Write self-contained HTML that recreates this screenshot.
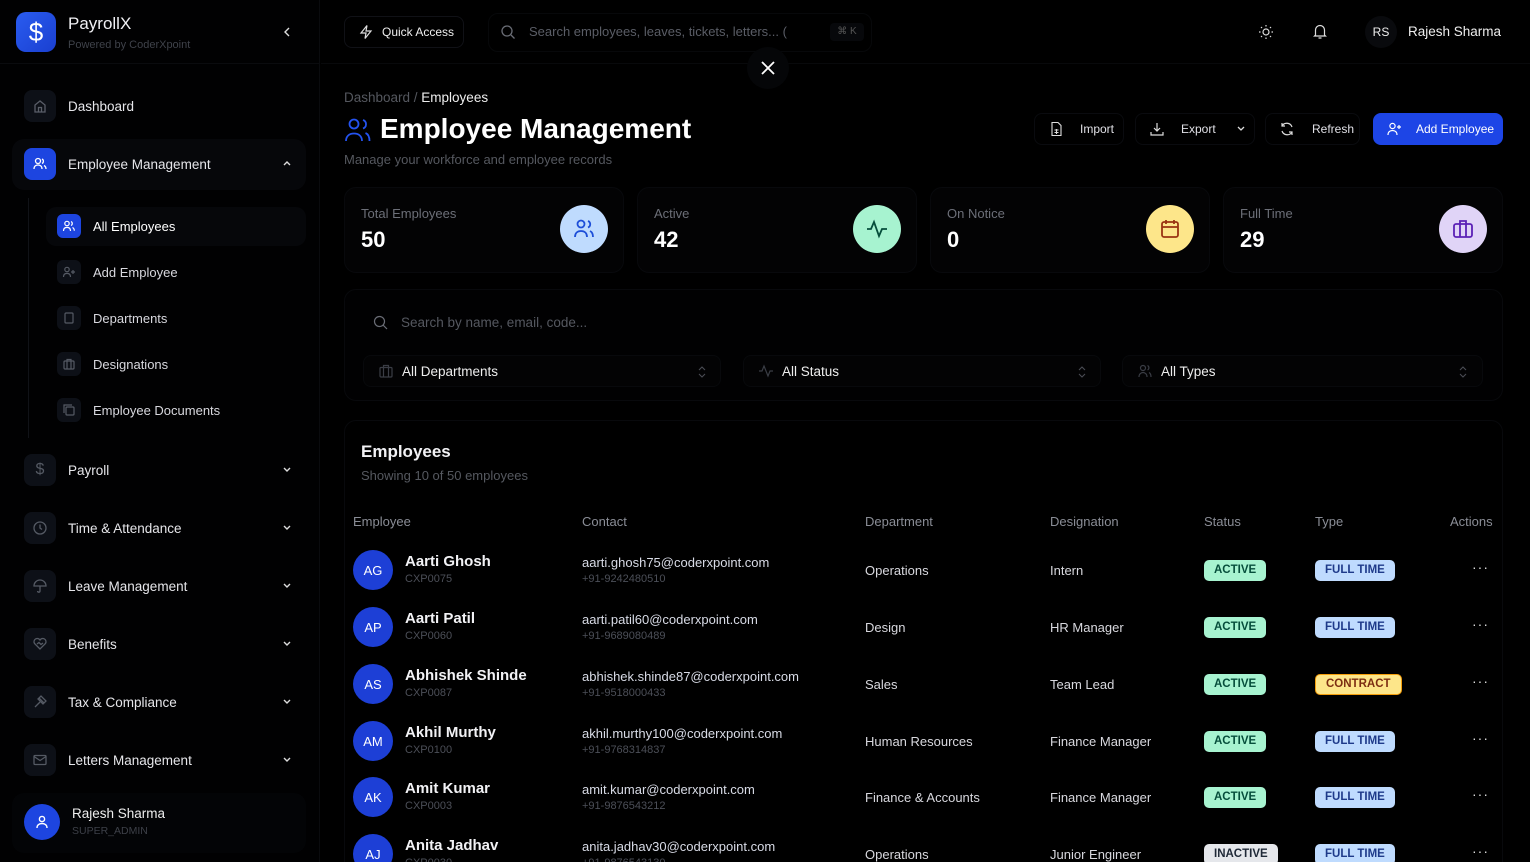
<!DOCTYPE html>
<html><head><meta charset="utf-8"><style>
*{box-sizing:border-box;margin:0;padding:0}
html,body{width:1530px;height:862px;overflow:hidden}
body{background:#000;font-family:"Liberation Sans",sans-serif;color:#e8e8ee;position:relative}
.abs{position:absolute}
svg{display:block}
.side{left:0;top:0;width:320px;height:862px;background:#010102;border-right:1px solid #0a0b0e}
.ic{width:32px;height:32px;border-radius:8px;background:#0d1017;display:flex;align-items:center;justify-content:center}
.nav{position:absolute;left:24px;display:flex;align-items:center;font-size:13.5px;color:#e6e6ea}
.nav .ic{margin-right:12px}
.chev{position:absolute;left:282px}
.sub{position:absolute;left:57px;display:flex;align-items:center;font-size:13px;color:#d8d8de}
.sub .ic{width:24px;height:24px;border-radius:6px;margin-right:12px}
.card{background:#030304;border:1px solid #08090c;border-radius:12px}
.lbl{font-size:13px;color:#6c6f78}
.num{font-size:22px;font-weight:bold;color:#fff}
.circ{width:48px;height:48px;border-radius:50%;display:flex;align-items:center;justify-content:center}
.th{position:absolute;top:514px;font-size:13px;color:#8a8d96}
.av{width:40px;height:40px;border-radius:50%;background:#1d3fd6;color:#fff;font-size:13px;display:flex;align-items:center;justify-content:center}
.nm{font-size:15px;font-weight:bold;color:#f2f2f5}
.cd{font-size:11px;color:#4c4f58;margin-top:3px}
.em{font-size:13px;color:#d8dbe6}
.ph{font-size:11px;color:#4c4f58;margin-top:3px}
.tx{font-size:13px;color:#d8d8de}
.b{position:absolute;height:21px;border-radius:5px;font-size:11.5px;font-weight:bold;padding:0 10px;line-height:21px}
.ba{background:#a7f3d0;color:#064e3b}
.bf{background:#bfdbfe;color:#1e3a8a}
.bc{background:#fde68a;color:#7c2d12;border:1px solid #f59e0b;line-height:19px}
.bi{background:#e5e7eb;color:#1f2937}
.dots{position:absolute;left:1472px;font-size:14px;color:#ddd;letter-spacing:1px}
.btn{position:absolute;top:113px;height:32px;border:1px solid #0a0b0f;border-radius:8px;display:flex;align-items:center;font-size:12px;color:#e0e0e6}
.sel{position:absolute;top:355px;height:32px;border:1px solid #08090c;border-radius:8px;background:#030304;display:flex;align-items:center;font-size:13.5px;color:#eee}
</style></head><body>

<div class="abs side">
  <div class="abs" style="left:16px;top:12px;width:40px;height:40px;border-radius:10px;background:linear-gradient(135deg,#2a5cf0,#1a3fd0);color:#fff;font-size:26px;display:flex;align-items:center;justify-content:center">$</div>
  <div class="abs" style="left:68px;top:14px;font-size:17px;color:#f0f0f4">PayrollX</div>
  <div class="abs" style="left:68px;top:39px;font-size:11px;color:#3f424a">Powered by CoderXpoint</div>
  <svg class="abs" style="left:282px;top:26px" width="10" height="12"><path d="M7 2 3 6 7 10" stroke="#ddd" stroke-width="1.4" fill="none"/></svg>
  <div class="abs" style="left:0;top:63px;width:320px;height:1px;background:#0a0b0e"></div>

  <div class="nav" style="top:90px"><div class="ic"><svg width="16" height="16"><path d="M3 14V7l5-4 5 4v7zM6.5 14V9.5h3V14" stroke="#5a5e68" stroke-width="1.3" fill="none"/></svg></div>Dashboard</div>

  <div class="abs" style="left:12px;top:139px;width:294px;height:51px;border-radius:12px;background:#06070a"></div>
  <div class="nav" style="top:148px"><div class="ic" style="background:#1d45e0"><svg width="16" height="16"><circle cx="6" cy="5" r="2.5" stroke="#fff" stroke-width="1.3" fill="none"/><path d="M2 13c0-3 2-4 4-4s4 1 4 4M10 3a2.5 2.5 0 010 4.5M12 9.5c1.3.7 2 1.8 2 3.5" stroke="#fff" stroke-width="1.3" fill="none"/></svg></div>Employee Management</div>
  <svg class="chev" style="top:158px" width="10" height="10"><path d="M2 7 5 4 8 7" stroke="#ddd" stroke-width="1.4" fill="none"/></svg>

  <div class="abs" style="left:28px;top:198px;width:1px;height:240px;background:#101217"></div>
  <div class="abs" style="left:46px;top:207px;width:260px;height:39px;border-radius:10px;background:#06070a"></div>
  <div class="sub" style="top:214px;left:57px"><div class="ic" style="background:#1d45e0"><svg width="14" height="14"><circle cx="5" cy="4.5" r="2.2" stroke="#fff" stroke-width="1.2" fill="none"/><path d="M1.5 12c0-2.6 1.6-3.6 3.5-3.6s3.5 1 3.5 3.6M9 2.5a2.2 2.2 0 010 4M10.5 8.5c1.2.6 1.8 1.7 1.8 3.3" stroke="#fff" stroke-width="1.2" fill="none"/></svg></div><span style="color:#fff">All Employees</span></div>
  <div class="sub" style="top:260px"><div class="ic"><svg width="14" height="14"><circle cx="5" cy="4.5" r="2.2" stroke="#555a64" stroke-width="1.2" fill="none"/><path d="M1.5 12c0-2.6 1.6-3.6 3.5-3.6s3.5 1 3.5 3.6M11 5v4M9 7h4" stroke="#555a64" stroke-width="1.2" fill="none"/></svg></div>Add Employee</div>
  <div class="sub" style="top:306px"><div class="ic"><svg width="14" height="14"><rect x="3" y="2" width="8" height="10" rx="1" stroke="#555a64" stroke-width="1.2" fill="none"/></svg></div>Departments</div>
  <div class="sub" style="top:352px"><div class="ic"><svg width="14" height="14"><rect x="2" y="4" width="10" height="8" rx="1" stroke="#555a64" stroke-width="1.2" fill="none"/><path d="M5 4V2.5h4V4M5 4v8M9 4v8" stroke="#555a64" stroke-width="1.2" fill="none"/></svg></div>Designations</div>
  <div class="sub" style="top:398px"><div class="ic"><svg width="14" height="14"><rect x="4" y="4" width="8" height="8" rx="1" stroke="#555a64" stroke-width="1.2" fill="none"/><path d="M2 10V2h8" stroke="#555a64" stroke-width="1.2" fill="none"/></svg></div>Employee Documents</div>

  <div class="nav" style="top:454px"><div class="ic" style="color:#555a64;font-size:16px">$</div>Payroll</div>
  <div class="nav" style="top:512px"><div class="ic"><svg width="16" height="16"><circle cx="8" cy="8" r="6" stroke="#555a64" stroke-width="1.3" fill="none"/><path d="M8 4.5V8l2 1.5" stroke="#555a64" stroke-width="1.3" fill="none"/></svg></div>Time &amp; Attendance</div>
  <div class="nav" style="top:570px"><div class="ic"><svg width="16" height="16"><path d="M2 8a6 6 0 0112 0zM8 8v5a1.2 1.2 0 01-2.4 0" stroke="#555a64" stroke-width="1.3" fill="none"/></svg></div>Leave Management</div>
  <div class="nav" style="top:628px"><div class="ic"><svg width="16" height="16"><path d="M8 13 2.5 7.5a3 3 0 015.5-3.5 3 3 0 015.5 3.5zM5 8l2 -1.5 2 2 2-1.5" stroke="#555a64" stroke-width="1.3" fill="none"/></svg></div>Benefits</div>
  <div class="nav" style="top:686px"><div class="ic"><svg width="16" height="16"><path d="M3 13l5-5M7 4l5 5M6 5l3-3 5 5-3 3z" stroke="#555a64" stroke-width="1.3" fill="none"/></svg></div>Tax &amp; Compliance</div>
  <div class="nav" style="top:744px"><div class="ic"><svg width="16" height="16"><rect x="2" y="3.5" width="12" height="9" rx="1" stroke="#555a64" stroke-width="1.3" fill="none"/><path d="M2 4.5l6 4 6-4" stroke="#555a64" stroke-width="1.3" fill="none"/></svg></div>Letters Management</div>
  <svg class="chev" style="top:465px" width="10" height="10"><path d="M2 3 5 6 8 3" stroke="#ddd" stroke-width="1.4" fill="none"/></svg>
  <svg class="chev" style="top:523px" width="10" height="10"><path d="M2 3 5 6 8 3" stroke="#ddd" stroke-width="1.4" fill="none"/></svg>
  <svg class="chev" style="top:581px" width="10" height="10"><path d="M2 3 5 6 8 3" stroke="#ddd" stroke-width="1.4" fill="none"/></svg>
  <svg class="chev" style="top:639px" width="10" height="10"><path d="M2 3 5 6 8 3" stroke="#ddd" stroke-width="1.4" fill="none"/></svg>
  <svg class="chev" style="top:697px" width="10" height="10"><path d="M2 3 5 6 8 3" stroke="#ddd" stroke-width="1.4" fill="none"/></svg>
  <svg class="chev" style="top:755px" width="10" height="10"><path d="M2 3 5 6 8 3" stroke="#ddd" stroke-width="1.4" fill="none"/></svg>

  <div class="abs" style="left:12px;top:793px;width:294px;height:60px;border-radius:12px;background:#030406"></div>
  <div class="abs" style="left:24px;top:804px;width:36px;height:36px;border-radius:50%;background:#1d45e0;display:flex;align-items:center;justify-content:center"><svg width="16" height="16"><circle cx="8" cy="5" r="2.6" stroke="#fff" stroke-width="1.4" fill="none"/><path d="M3 14c0-3 2-4.5 5-4.5s5 1.5 5 4.5" stroke="#fff" stroke-width="1.4" fill="none"/></svg></div>
  <div class="abs" style="left:72px;top:806px;font-size:13.5px;color:#eee">Rajesh Sharma</div>
  <div class="abs" style="left:72px;top:825px;font-size:10.5px;color:#3d4048">SUPER_ADMIN</div>
</div>

<!-- header -->
<div class="abs" style="left:321px;top:63px;width:1209px;height:1px;background:#08090b"></div>
<div class="abs" style="left:344px;top:16px;width:120px;height:32px;border:1px solid #101116;border-radius:8px;display:flex;align-items:center;padding-left:13px;font-size:12px;color:#eee"><svg width="16" height="16" style="margin-right:8px"><path d="M9 1.5 3 9h5l-1 5.5L13 7H8z" stroke="#ddd" stroke-width="1.2" fill="none"/></svg>Quick Access</div>
<div class="abs" style="left:488px;top:13px;width:384px;height:39px;border:1px solid #07080a;border-radius:10px"></div>
<svg class="abs" style="left:500px;top:24px" width="16" height="16"><circle cx="7" cy="7" r="5" stroke="#6a6d76" stroke-width="1.3" fill="none"/><path d="M11 11l3.5 3.5" stroke="#6a6d76" stroke-width="1.3"/></svg>
<div class="abs" style="left:529px;top:24px;font-size:13px;color:#5a5d66">Search employees, leaves, tickets, letters... (</div>
<div class="abs" style="left:747px;top:47px;width:42px;height:42px;border-radius:50%;background:#050608"></div>
<svg class="abs" style="left:761px;top:61px" width="14" height="14"><path d="M1 1l12 12M13 1 1 13" stroke="#fff" stroke-width="1.8"/></svg>
<div class="abs" style="left:830px;top:23px;width:34px;height:18px;border-radius:4px;background:#07080b;font-size:10px;color:#555;text-align:center;line-height:18px">⌘ K</div>
<svg class="abs" style="left:1258px;top:24px" width="16" height="16"><circle cx="8" cy="8" r="3" stroke="#ddd" stroke-width="1.2" fill="none"/><path d="M8 1v1.5M8 13.5V15M1 8h1.5M13.5 8H15M3 3l1 1M12 12l1 1M3 13l1-1M12 4l1-1" stroke="#ddd" stroke-width="1.2"/></svg>
<svg class="abs" style="left:1312px;top:23px" width="16" height="17"><path d="M3.5 12V7a4.5 4.5 0 019 0v5l1 1h-11zM6.5 15h3" stroke="#ddd" stroke-width="1.2" fill="none"/></svg>
<div class="abs" style="left:1365px;top:16px;width:32px;height:32px;border-radius:50%;background:#090a0d;font-size:12px;color:#eee;display:flex;align-items:center;justify-content:center">RS</div>
<div class="abs" style="left:1408px;top:24px;font-size:13.5px;color:#eee">Rajesh Sharma</div>

<!-- title -->
<div class="abs" style="left:344px;top:90px;font-size:13.5px;color:#55585f">Dashboard / <span style="color:#eee">Employees</span></div>
<svg class="abs" style="left:344px;top:117px" width="28" height="26"><circle cx="10" cy="7" r="4.5" stroke="#2453f0" stroke-width="1.8" fill="none"/><path d="M2 24c0-5 3.5-7.5 8-7.5s8 2.5 8 7.5M19 3a4.5 4.5 0 010 8.5M21.5 16c2.5 1 4 3.5 4 8" stroke="#2453f0" stroke-width="1.8" fill="none"/></svg>
<div class="abs" style="left:380px;top:113px;font-size:28px;font-weight:bold;color:#fff">Employee Management</div>
<div class="abs" style="left:344px;top:152px;font-size:13px;color:#55585f">Manage your workforce and employee records</div>

<div class="btn" style="left:1034px;width:90px;padding-left:13px"><svg width="16" height="16" style="margin-right:16px"><path d="M4 1.5h6l3 3V14.5H4zM6.5 9h4M6.5 11.5h4M8.5 8v5" stroke="#ddd" stroke-width="1.1" fill="none"/></svg>Import</div>
<div class="btn" style="left:1135px;width:120px;padding-left:13px"><svg width="16" height="16" style="margin-right:16px"><path d="M8 2v8M5 7l3 3 3-3M2 11v3h12v-3" stroke="#ddd" stroke-width="1.2" fill="none"/></svg>Export<svg width="10" height="10" style="margin-left:20px"><path d="M2 3 5 6 8 3" stroke="#ddd" stroke-width="1.3" fill="none"/></svg></div>
<div class="btn" style="left:1265px;width:95px;padding-left:13px"><svg width="16" height="16" style="margin-right:17px"><path d="M13 6a5.5 5.5 0 00-10-1M3 2v3h3M3 10a5.5 5.5 0 0010 1M13 14v-3h-3" stroke="#ddd" stroke-width="1.2" fill="none"/></svg>Refresh</div>
<div class="btn" style="left:1373px;width:130px;background:#1d45e6;border-color:#1d45e6;padding-left:12px;color:#fff"><svg width="16" height="16" style="margin-right:14px"><circle cx="6.5" cy="5" r="2.6" stroke="#fff" stroke-width="1.2" fill="none"/><path d="M2 14c0-3 2-4.5 4.5-4.5S11 11 11 14M13 4v4M11 6h4" stroke="#fff" stroke-width="1.2" fill="none"/></svg>Add Employee</div>

<!-- stats -->
<div class="abs card" style="left:344px;top:187px;width:280px;height:86px"></div>
<div class="abs card" style="left:637px;top:187px;width:280px;height:86px"></div>
<div class="abs card" style="left:930px;top:187px;width:280px;height:86px"></div>
<div class="abs card" style="left:1223px;top:187px;width:280px;height:86px"></div>
<div class="abs lbl" style="left:361px;top:206px">Total Employees</div><div class="abs num" style="left:361px;top:227px">50</div>
<div class="abs lbl" style="left:654px;top:206px">Active</div><div class="abs num" style="left:654px;top:227px">42</div>
<div class="abs lbl" style="left:947px;top:206px">On Notice</div><div class="abs num" style="left:947px;top:227px">0</div>
<div class="abs lbl" style="left:1240px;top:206px">Full Time</div><div class="abs num" style="left:1240px;top:227px">29</div>
<div class="abs circ" style="left:560px;top:205px;background:#bfdbfe"><svg width="22" height="22"><circle cx="8" cy="6" r="3.5" stroke="#1d4ed8" stroke-width="1.8" fill="none"/><path d="M2 19c0-4 2.5-6 6-6s6 2 6 6M15 3a3.5 3.5 0 010 6.5M17 13c2 1 3 3 3 6" stroke="#1d4ed8" stroke-width="1.8" fill="none"/></svg></div>
<div class="abs circ" style="left:853px;top:205px;background:#a7f3d0"><svg width="22" height="22"><path d="M1 11h4l3-7 5 14 3-7h5" stroke="#064e3b" stroke-width="1.8" fill="none"/></svg></div>
<div class="abs circ" style="left:1146px;top:205px;background:#fde68a"><svg width="22" height="22"><rect x="3" y="4" width="16" height="15" rx="2" stroke="#9a3412" stroke-width="1.8" fill="none"/><path d="M3 9h16M7 2v4M15 2v4" stroke="#9a3412" stroke-width="1.8"/></svg></div>
<div class="abs circ" style="left:1439px;top:205px;background:#e0d4f7"><svg width="22" height="22"><rect x="2" y="6" width="18" height="13" rx="2" stroke="#5b21b6" stroke-width="1.8" fill="none"/><path d="M8 6V3h6v3M8 6v13M14 6v13" stroke="#5b21b6" stroke-width="1.8" fill="none"/></svg></div>

<!-- filters -->
<div class="abs card" style="left:344px;top:289px;width:1159px;height:112px;background:#010102"></div>
<svg class="abs" style="left:373px;top:315px" width="15" height="15"><circle cx="6.5" cy="6.5" r="5" stroke="#6a6d76" stroke-width="1.2" fill="none"/><path d="M10 10l4 4" stroke="#6a6d76" stroke-width="1.2"/></svg>
<div class="abs" style="left:401px;top:315px;font-size:13.5px;color:#555860">Search by name, email, code...</div>
<div class="sel" style="left:363px;width:358px;padding-left:14px"><svg width="16" height="16" style="margin-right:8px"><rect x="2" y="4.5" width="12" height="9.5" rx="1" stroke="#3a3d45" stroke-width="1.2" fill="none"/><path d="M5.5 4.5V2.5h5v2M5.5 4.5v9.5M10.5 4.5v9.5" stroke="#3a3d45" stroke-width="1.2" fill="none"/></svg>All Departments<svg class="abs" style="left:333px;top:9px" width="10" height="14"><path d="M2 5l3-3 3 3M2 9l3 3 3-3" stroke="#4a4d55" stroke-width="1.1" fill="none"/></svg></div>
<div class="sel" style="left:743px;width:358px;padding-left:14px"><svg width="16" height="16" style="margin-right:8px"><path d="M1 8h3l2-5 4 10 2-5h3" stroke="#3a3d45" stroke-width="1.2" fill="none"/></svg>All Status<svg class="abs" style="left:333px;top:9px" width="10" height="14"><path d="M2 5l3-3 3 3M2 9l3 3 3-3" stroke="#4a4d55" stroke-width="1.1" fill="none"/></svg></div>
<div class="sel" style="left:1122px;width:361px;padding-left:14px"><svg width="16" height="16" style="margin-right:8px"><circle cx="6" cy="5" r="2.5" stroke="#3a3d45" stroke-width="1.2" fill="none"/><path d="M2 14c0-3 2-4.5 4-4.5s4 1.5 4 4.5M10.5 2.5a2.5 2.5 0 010 4.5M12 9.5c1.3.7 2 2 2 4.5" stroke="#3a3d45" stroke-width="1.2" fill="none"/></svg>All Types<svg class="abs" style="left:335px;top:9px" width="10" height="14"><path d="M2 5l3-3 3 3M2 9l3 3 3-3" stroke="#4a4d55" stroke-width="1.1" fill="none"/></svg></div>

<!-- table -->
<div class="abs card" style="left:344px;top:420px;width:1159px;height:460px;background:#000"></div>
<div class="abs" style="left:361px;top:442px;font-size:17px;font-weight:bold;color:#f2f2f5">Employees</div>
<div class="abs" style="left:361px;top:468px;font-size:13px;color:#55585f">Showing 10 of 50 employees</div>
<div class="th" style="left:353px">Employee</div>
<div class="th" style="left:582px">Contact</div>
<div class="th" style="left:865px">Department</div>
<div class="th" style="left:1050px">Designation</div>
<div class="th" style="left:1204px">Status</div>
<div class="th" style="left:1315px">Type</div>
<div class="th" style="left:1450px">Actions</div>

<div class="abs av" style="left:353px;top:550px">AG</div>
<div class="abs" style="left:405px;top:553px"><div class="nm">Aarti Ghosh</div><div class="cd">CXP0075</div></div>
<div class="abs" style="left:582px;top:555px"><div class="em">aarti.ghosh75@coderxpoint.com</div><div class="ph">+91-9242480510</div></div>
<div class="abs tx" style="left:865px;top:563px">Operations</div><div class="abs tx" style="left:1050px;top:563px">Intern</div>
<div class="b ba" style="left:1204px;top:560px">ACTIVE</div><div class="b bf" style="left:1315px;top:560px">FULL TIME</div><div class="dots" style="top:559px">···</div>

<div class="abs av" style="left:353px;top:607px">AP</div>
<div class="abs" style="left:405px;top:610px"><div class="nm">Aarti Patil</div><div class="cd">CXP0060</div></div>
<div class="abs" style="left:582px;top:612px"><div class="em">aarti.patil60@coderxpoint.com</div><div class="ph">+91-9689080489</div></div>
<div class="abs tx" style="left:865px;top:620px">Design</div><div class="abs tx" style="left:1050px;top:620px">HR Manager</div>
<div class="b ba" style="left:1204px;top:617px">ACTIVE</div><div class="b bf" style="left:1315px;top:617px">FULL TIME</div><div class="dots" style="top:616px">···</div>

<div class="abs av" style="left:353px;top:664px">AS</div>
<div class="abs" style="left:405px;top:667px"><div class="nm">Abhishek Shinde</div><div class="cd">CXP0087</div></div>
<div class="abs" style="left:582px;top:669px"><div class="em">abhishek.shinde87@coderxpoint.com</div><div class="ph">+91-9518000433</div></div>
<div class="abs tx" style="left:865px;top:677px">Sales</div><div class="abs tx" style="left:1050px;top:677px">Team Lead</div>
<div class="b ba" style="left:1204px;top:674px">ACTIVE</div><div class="b bc" style="left:1315px;top:674px">CONTRACT</div><div class="dots" style="top:673px">···</div>

<div class="abs av" style="left:353px;top:721px">AM</div>
<div class="abs" style="left:405px;top:724px"><div class="nm">Akhil Murthy</div><div class="cd">CXP0100</div></div>
<div class="abs" style="left:582px;top:726px"><div class="em">akhil.murthy100@coderxpoint.com</div><div class="ph">+91-9768314837</div></div>
<div class="abs tx" style="left:865px;top:734px">Human Resources</div><div class="abs tx" style="left:1050px;top:734px">Finance Manager</div>
<div class="b ba" style="left:1204px;top:731px">ACTIVE</div><div class="b bf" style="left:1315px;top:731px">FULL TIME</div><div class="dots" style="top:730px">···</div>

<div class="abs av" style="left:353px;top:777px">AK</div>
<div class="abs" style="left:405px;top:780px"><div class="nm">Amit Kumar</div><div class="cd">CXP0003</div></div>
<div class="abs" style="left:582px;top:782px"><div class="em">amit.kumar@coderxpoint.com</div><div class="ph">+91-9876543212</div></div>
<div class="abs tx" style="left:865px;top:790px">Finance &amp; Accounts</div><div class="abs tx" style="left:1050px;top:790px">Finance Manager</div>
<div class="b ba" style="left:1204px;top:787px">ACTIVE</div><div class="b bf" style="left:1315px;top:787px">FULL TIME</div><div class="dots" style="top:786px">···</div>

<div class="abs av" style="left:353px;top:834px">AJ</div>
<div class="abs" style="left:405px;top:837px"><div class="nm">Anita Jadhav</div><div class="cd">CXP0030</div></div>
<div class="abs" style="left:582px;top:839px"><div class="em">anita.jadhav30@coderxpoint.com</div><div class="ph">+91-9876543130</div></div>
<div class="abs tx" style="left:865px;top:847px">Operations</div><div class="abs tx" style="left:1050px;top:847px">Junior Engineer</div>
<div class="b bi" style="left:1204px;top:844px">INACTIVE</div><div class="b bf" style="left:1315px;top:844px">FULL TIME</div><div class="dots" style="top:843px">···</div>

</body></html>
